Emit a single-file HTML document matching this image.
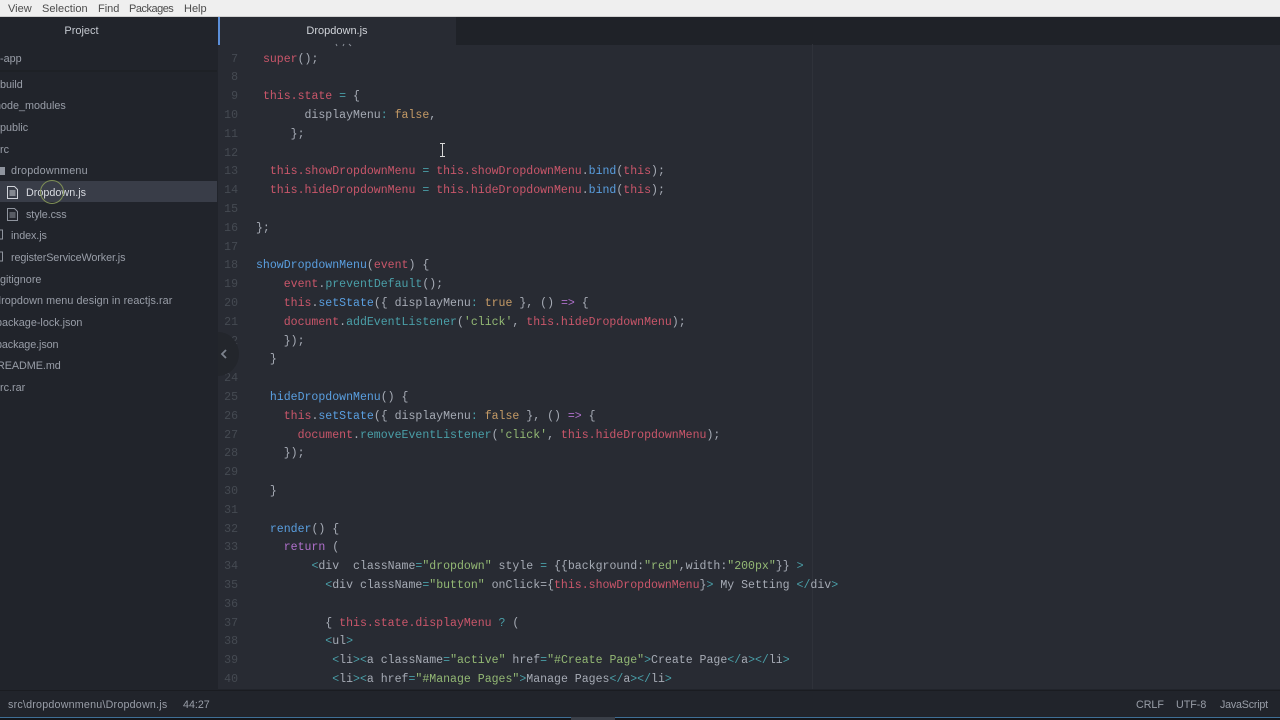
<!DOCTYPE html>
<html><head><meta charset="utf-8">
<style>
html,body{margin:0;padding:0;width:1280px;height:720px;overflow:hidden;background:#21242b}
*{box-sizing:border-box}
.a{position:absolute}
#menu{left:0;top:0;width:1280px;height:17px;background:#efefef;border-bottom:1px solid #d0d0d0;font:11px/17px "Liberation Sans",sans-serif;color:#4c4c4c}
#menu span{position:absolute;top:1px}
#side{left:0;top:17px;width:218px;height:673px;background:#21242b}
.it{position:absolute;font:10.8px/16px "Liberation Sans",sans-serif;color:#999ea8;white-space:nowrap;margin-top:1px}
#ed{left:218px;top:44px;width:1062px;height:645px;background:#282b33;overflow:hidden;}
.g{position:absolute;left:812px;top:44px;width:1px;height:645px;background:#2f323a}
.n{position:absolute;width:20px;left:218px;text-align:right;font:11.55px/18.8px "Liberation Mono",monospace;color:#454a52;margin-top:1.200px}
.l{position:absolute;left:256px;margin:1.200px 0 0;white-space:pre;font:11.55px/18.8px "Liberation Mono",monospace;color:#a6abb5;filter:blur(.25px)}
.r{color:#c9566a}.b{color:#5a9fe0}.c{color:#4a9fa8}.o{color:#c49a66}.s{color:#93b874}.p{color:#b070cc}
#status{left:0;top:690px;width:1280px;height:27px;background:#21242b;border-top:1px solid #1a1c21;font:10.7px/28px "Liberation Sans",sans-serif;color:#999ea8}
#status span{position:absolute;top:0}
</style></head><body>
<div id="menu" class="a"><span style="left:8px">View</span><span style="left:42px;letter-spacing:.05px">Selection</span><span style="left:98px">Find</span><span style="left:129px;letter-spacing:-.5px">Packages</span><span style="left:184px">Help</span></div>

<div id="side" class="a"></div>
<div class="a" style="left:0;top:17px;width:163px;height:27px;background:#21242b;color:#c5c9d0;font:11px/28px 'Liberation Sans',sans-serif;text-align:center;">Project</div>
<div class="a" style="left:0;top:70px;width:217px;height:2px;background:#1e2126"></div>
<div class="a" style="left:0;top:181px;width:217px;height:21px;background:#393d48"></div>
<div class="it" style="left:0;top:50px">-app</div>
<div class="it" style="left:0;top:76px">build</div>
<div class="it" style="left:-5px;top:97px">node_modules</div>
<div class="it" style="left:0;top:119px">public</div>
<div class="it" style="left:0;top:141px">rc</div>
<div class="a" style="left:0;top:167px;width:5px;height:8px;background:#8f949e"></div>
<div class="it" style="left:11px;top:162px;letter-spacing:.2px">dropdownmenu</div>
<div class="it" style="left:26px;top:184px;color:#d7dae0">Dropdown.js</div>
<div class="it" style="left:26px;top:206px;letter-spacing:-.1px">style.css</div>
<div class="it" style="left:11px;top:227px;letter-spacing:-.1px">index.js</div>
<div class="it" style="left:11px;top:249px;letter-spacing:-.1px">registerServiceWorker.js</div>
<div class="it" style="left:0;top:271px">gitignore</div>
<div class="it" style="left:-5px;top:292px;letter-spacing:.08px">dropdown menu design in reactjs.rar</div>
<div class="it" style="left:-4px;top:314px">package-lock.json</div>
<div class="it" style="left:-4px;top:336px;letter-spacing:-.1px">package.json</div>
<div class="it" style="left:-3px;top:357px;letter-spacing:-.05px">README.md</div>
<div class="it" style="left:0;top:379px">rc.rar</div>
<svg class="a" style="left:0;top:160px" width="40" height="110" fill="none" stroke="#8f949e" stroke-width="1">
<path d="M7.500 26.500h7l3 3v9h-10z" stroke="#d0d3d9"/><path d="M9.500 31h6M9.500 33h6M9.500 35h6" stroke="#d0d3d9"/>
<path d="M7.500 48.500h7l3 3v9h-10z"/><path d="M9.500 53h6M9.500 55h6M9.500 57h6"/>
<path d="M0 70h2.500v9H0M0 92h2.500v9H0"/>
</svg>

<div id="ed" class="a"></div>
<div class="a" style="left:218px;top:17px;width:238px;height:28px;background:#282b33;color:#d0d3d9;font:11px/28px 'Liberation Sans',sans-serif;text-align:center;">Dropdown.js</div>
<div class="a" style="left:456px;top:17px;width:824px;height:28px;background:#1f2228"></div>
<div class="a" style="left:218px;top:17px;width:2px;height:28px;background:#5b8fd9"></div>
<div class="g"></div>
<svg class="a" style="left:335px;top:42px" width="20" height="6" fill="none" stroke="#8a8f99"><path d="M1 2l1 2M8 4l1-2M14 2l2 2"/></svg>

<div class="n" style="top:49.500px">7</div><div class="l" style="top:49.500px"> <span class="r">super</span>();</div>
<div class="n" style="top:68.300px">8</div>
<div class="n" style="top:87.100px">9</div><div class="l" style="top:87.100px"> <span class="r">this.state</span> <span class="c">=</span> {</div>
<div class="n" style="top:105.900px">10</div><div class="l" style="top:105.900px">       displayMenu<span class="c">:</span> <span class="o">false</span>,</div>
<div class="n" style="top:124.700px">11</div><div class="l" style="top:124.700px">     };</div>
<div class="n" style="top:143.500px">12</div>
<div class="n" style="top:162.300px">13</div><div class="l" style="top:162.300px">  <span class="r">this.showDropdownMenu</span> <span class="c">=</span> <span class="r">this.showDropdownMenu</span>.<span class="b">bind</span>(<span class="r">this</span>);</div>
<div class="n" style="top:181.100px">14</div><div class="l" style="top:181.100px">  <span class="r">this.hideDropdownMenu</span> <span class="c">=</span> <span class="r">this.hideDropdownMenu</span>.<span class="b">bind</span>(<span class="r">this</span>);</div>
<div class="n" style="top:199.900px">15</div>
<div class="n" style="top:218.700px">16</div><div class="l" style="top:218.700px">};</div>
<div class="n" style="top:237.500px">17</div>
<div class="n" style="top:256.300px">18</div><div class="l" style="top:256.300px"><span class="b">showDropdownMenu</span>(<span class="r">event</span>) {</div>
<div class="n" style="top:275.100px">19</div><div class="l" style="top:275.100px">    <span class="r">event</span>.<span class="c">preventDefault</span>();</div>
<div class="n" style="top:293.900px">20</div><div class="l" style="top:293.900px">    <span class="r">this</span>.<span class="b">setState</span>({ displayMenu<span class="c">:</span> <span class="o">true</span> }, () <span class="p">=&gt;</span> {</div>
<div class="n" style="top:312.700px">21</div><div class="l" style="top:312.700px">    <span class="r">document</span>.<span class="c">addEventListener</span>(<span class="s">'click'</span>, <span class="r">this.hideDropdownMenu</span>);</div>
<div class="n" style="top:331.500px">22</div><div class="l" style="top:331.500px">    });</div>
<div class="n" style="top:350.300px">23</div><div class="l" style="top:350.300px">  }</div>
<div class="n" style="top:369.100px">24</div>
<div class="n" style="top:387.900px">25</div><div class="l" style="top:387.900px">  <span class="b">hideDropdownMenu</span>() {</div>
<div class="n" style="top:406.700px">26</div><div class="l" style="top:406.700px">    <span class="r">this</span>.<span class="b">setState</span>({ displayMenu<span class="c">:</span> <span class="o">false</span> }, () <span class="p">=&gt;</span> {</div>
<div class="n" style="top:425.500px">27</div><div class="l" style="top:425.500px">      <span class="r">document</span>.<span class="c">removeEventListener</span>(<span class="s">'click'</span>, <span class="r">this.hideDropdownMenu</span>);</div>
<div class="n" style="top:444.300px">28</div><div class="l" style="top:444.300px">    });</div>
<div class="n" style="top:463.100px">29</div>
<div class="n" style="top:481.900px">30</div><div class="l" style="top:481.900px">  }</div>
<div class="n" style="top:500.700px">31</div>
<div class="n" style="top:519.500px">32</div><div class="l" style="top:519.500px">  <span class="b">render</span>() {</div>
<div class="n" style="top:538.300px">33</div><div class="l" style="top:538.300px">    <span class="p">return</span> (</div>
<div class="n" style="top:557.100px">34</div><div class="l" style="top:557.100px">        <span class="c">&lt;</span>div  className<span class="c">=</span><span class="s">"dropdown"</span> style <span class="c">=</span> {{background:<span class="s">"red"</span>,width:<span class="s">"200px"</span>}} <span class="c">&gt;</span></div>
<div class="n" style="top:575.900px">35</div><div class="l" style="top:575.900px">          <span class="c">&lt;</span>div className<span class="c">=</span><span class="s">"button"</span> onClick={<span class="r">this.showDropdownMenu</span>}<span class="c">&gt;</span> My Setting <span class="c">&lt;/</span>div<span class="c">&gt;</span></div>
<div class="n" style="top:594.700px">36</div>
<div class="n" style="top:613.500px">37</div><div class="l" style="top:613.500px">          { <span class="r">this.state.displayMenu</span> <span class="c">?</span> (</div>
<div class="n" style="top:632.300px">38</div><div class="l" style="top:632.300px">          <span class="c">&lt;</span>ul<span class="c">&gt;</span></div>
<div class="n" style="top:651.100px">39</div><div class="l" style="top:651.100px">           <span class="c">&lt;</span>li<span class="c">&gt;&lt;</span>a className<span class="c">=</span><span class="s">"active"</span> href<span class="c">=</span><span class="s">"#Create Page"</span><span class="c">&gt;</span>Create Page<span class="c">&lt;/</span>a<span class="c">&gt;&lt;/</span>li<span class="c">&gt;</span></div>
<div class="n" style="top:669.900px">40</div><div class="l" style="top:669.900px">           <span class="c">&lt;</span>li<span class="c">&gt;&lt;</span>a href<span class="c">=</span><span class="s">"#Manage Pages"</span><span class="c">&gt;</span>Manage Pages<span class="c">&lt;/</span>a<span class="c">&gt;&lt;/</span>li<span class="c">&gt;</span></div>

<svg class="a" style="left:218px;top:332px" width="22" height="44"><path d="M0 0a21 22 0 0 1 0 44z" fill="#23262c"/><path d="M8 18l-4 4 4 4" fill="none" stroke="#7d838e" stroke-width="1.800"/></svg>
<svg class="a" style="left:438px;top:143px" width="9" height="15" fill="none" stroke="#d8d8d8" stroke-width="1"><path d="M2 .5h5M2 13.500h5M4.500 .5v13"/></svg>
<div class="a" style="left:40px;top:180px;width:24px;height:24px;border-radius:50%;border:1.500px solid #7f8f55"></div>

<div id="status" class="a"><span style="left:8px;letter-spacing:.22px">src\dropdownmenu\Dropdown.js</span><span style="left:183px">44:27</span><span style="left:1136px">CRLF</span><span style="left:1176px">UTF-8</span><span style="left:1220px;letter-spacing:-.2px">JavaScript</span></div>
<div class="a" style="left:0;top:717px;width:1280px;height:1px;background:#3f6f96"></div>
<div class="a" style="left:0;top:718px;width:1280px;height:2px;background:#14161a"></div>
<div class="a" style="left:571px;top:717px;width:44px;height:3px;background:#3a3f48"></div>
</body></html>
